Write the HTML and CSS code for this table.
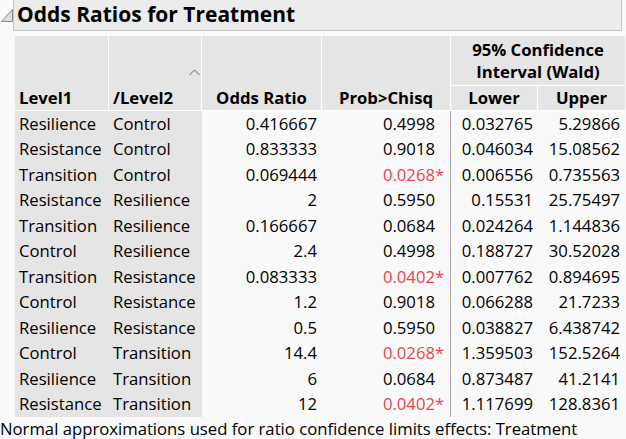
FILE: index.html
```html
<!DOCTYPE html>
<html>
<head>
<meta charset="utf-8">
<link rel="stylesheet" href="styles.css">
</head>
<body>
<div class="outline">
  <svg class="disclose" width="13" height="30" viewBox="0 0 13 30"><polygon points="1.5,21.5 12.5,9.5 12.5,21.5" fill="#dcdcdc" stroke="#8a8a8a" stroke-width="1"/></svg>
  <div class="titlebar">Odds Ratios for Treatment</div>
</div>
<table class="report">
  <colgroup>
    <col class="c1"><col class="c2"><col class="c3"><col class="c4"><col class="c5"><col class="c6">
  </colgroup>
  <thead>
    <tr class="h1">
      <th rowspan="2" class="left">Level1</th>
      <th rowspan="2" class="left sorted">/Level2<svg class="caret" width="11" height="7" viewBox="0 0 11 7"><polyline points="0.5,6 5.5,1 10.5,6" fill="none" stroke="#666" stroke-width="1"/></svg></th>
      <th rowspan="2">Odds Ratio</th>
      <th rowspan="2">Prob&gt;Chisq</th>
      <th colspan="2" class="group">95% Confidence<br>Interval (Wald)</th>
    </tr>
    <tr class="h2">
      <th>Lower</th>
      <th class="last">Upper</th>
    </tr>
  </thead>
  <tbody>
    <tr><td class="lv">Resilience</td><td class="lv">Control</td><td class="num">0.416667</td><td class="num p">0.4998<span class="flag"></span></td><td class="num">0.032765</td><td class="num">5.29866</td></tr>
    <tr><td class="lv">Resistance</td><td class="lv">Control</td><td class="num">0.833333</td><td class="num p">0.9018<span class="flag"></span></td><td class="num">0.046034</td><td class="num">15.08562</td></tr>
    <tr><td class="lv">Transition</td><td class="lv">Control</td><td class="num">0.069444</td><td class="num p sig">0.0268<span class="flag">*</span></td><td class="num">0.006556</td><td class="num">0.735563</td></tr>
    <tr><td class="lv">Resistance</td><td class="lv">Resilience</td><td class="num">2</td><td class="num p">0.5950<span class="flag"></span></td><td class="num">0.15531</td><td class="num">25.75497</td></tr>
    <tr><td class="lv">Transition</td><td class="lv">Resilience</td><td class="num">0.166667</td><td class="num p">0.0684<span class="flag"></span></td><td class="num">0.024264</td><td class="num">1.144836</td></tr>
    <tr><td class="lv">Control</td><td class="lv">Resilience</td><td class="num">2.4</td><td class="num p">0.4998<span class="flag"></span></td><td class="num">0.188727</td><td class="num">30.52028</td></tr>
    <tr><td class="lv">Transition</td><td class="lv">Resistance</td><td class="num">0.083333</td><td class="num p sig">0.0402<span class="flag">*</span></td><td class="num">0.007762</td><td class="num">0.894695</td></tr>
    <tr><td class="lv">Control</td><td class="lv">Resistance</td><td class="num">1.2</td><td class="num p">0.9018<span class="flag"></span></td><td class="num">0.066288</td><td class="num">21.7233</td></tr>
    <tr><td class="lv">Resilience</td><td class="lv">Resistance</td><td class="num">0.5</td><td class="num p">0.5950<span class="flag"></span></td><td class="num">0.038827</td><td class="num">6.438742</td></tr>
    <tr><td class="lv">Control</td><td class="lv">Transition</td><td class="num">14.4</td><td class="num p sig">0.0268<span class="flag">*</span></td><td class="num">1.359503</td><td class="num">152.5264</td></tr>
    <tr><td class="lv">Resilience</td><td class="lv">Transition</td><td class="num">6</td><td class="num p">0.0684<span class="flag"></span></td><td class="num">0.873487</td><td class="num">41.2141</td></tr>
    <tr><td class="lv">Resistance</td><td class="lv">Transition</td><td class="num">12</td><td class="num p sig">0.0402<span class="flag">*</span></td><td class="num">1.117699</td><td class="num">128.8361</td></tr>
  </tbody>
</table>
<p class="note">Normal approximations used for ratio confidence limits effects: Treatment</p>
</body>
</html>
```
FILE: styles.css
```css
html, body {
  margin: 0;
  padding: 0;
  background: #f9f9f9;
  font-family: "Open Sans", "Noto Sans", sans-serif;
  color: #000;
  overflow: hidden;
}
.outline {
  display: flex;
  align-items: flex-start;
  height: 31px;
}
.disclose {
  flex: none;
  display: block;
}
.titlebar {
  box-sizing: border-box;
  width: 609px;
  height: 31px;
  background: #ececec;
  border: 1px solid #c6c6c6;
  border-top: none;
  font-weight: bold;
  font-size: 21px;
  line-height: 28px;
  padding-left: 3px;
}
.report {
  margin: 5px 0 0 15px;
  table-layout: fixed;
  width: 610px;
  border-collapse: separate;
  border-spacing: 0;
  font-size: 16.7px;
}
.c1 { width: 94px; }
.c2 { width: 93px; }
.c3 { width: 120px; }
.c4 { width: 129px; }
.c5 { width: 87px; }
.c6 { width: 87px; }
th {
  background: #e5e5e5;
  font-weight: bold;
  text-align: center;
  vertical-align: bottom;
  border-right: 1px solid #fff;
  border-bottom: 1px solid #fff;
  padding: 0 2px 1px;
  line-height: 22px;
  white-space: nowrap;
}
th.left { text-align: left; padding-left: 4px; }
th.last { border-right: none; }
th.sorted { position: relative; }
.caret {
  position: absolute;
  right: 1px;
  top: 33px;
}
.h1 { height: 50px; }
.h1 th.group {
  vertical-align: top;
  padding-top: 3px;
  padding-bottom: 1px;
  line-height: 22px;
  border-right: none;
}
.h2 { height: 25px; }
td {
  height: 25.5px;
  padding: 0 5px 0 4px;
  line-height: 22px;
  white-space: nowrap;
}
td.lv { background: #e5e5e5; }
td.num { text-align: right; }
td.p {
  border-right: 1px solid #a8a8a8;
  padding-right: 7px;
}
.flag {
  display: inline-block;
  width: 8px;
  text-align: left;
}
.sig { color: #e8434f; }
.note {
  margin: 1px 0 0 0;
  font-size: 16.7px;
  line-height: 22px;
  white-space: nowrap;
}
```
